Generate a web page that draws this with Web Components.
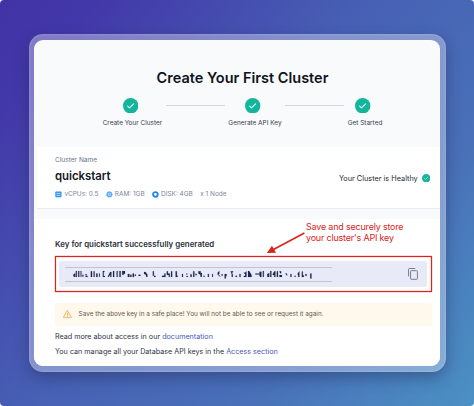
<!DOCTYPE html>
<html lang="en">
<head>
<meta charset="utf-8">
<title>Create Your First Cluster</title>
<style>
    html, body{
        margin:0;
        padding:0;
        background:#fff;
        overflow:hidden;
        font-family:Inter, "Liberation Sans", sans-serif;
    }
</style>
</head>
<body>
<app-stage>
    <setup-header heading="Create Your First Cluster" steps="Create Your Cluster,Generate API Key,Get Started"></setup-header>
    <cluster-summary name="quickstart" status="Your Cluster is Healthy">
        <spec-item icon="cpu">vCPUs: 0.5</spec-item>
        <spec-item icon="ram">RAM: 1GB</spec-item>
        <spec-item icon="disk">DISK: 4GB</spec-item>
        <spec-item>x 1 Node</spec-item>
    </cluster-summary>
    <key-section>
        <span slot="title">Key for quickstart successfully generated</span>
        <key-field slot="key"></key-field>
        <warning-bar slot="warning">Save the above key in a safe place! You will not be able to see or request it again.</warning-bar>
        <help-line>Read more about access in our <a slot="link">documentation</a></help-line>
        <help-line>You can manage all your Database API keys in the <a slot="link">Access section</a></help-line>
        <callout-note slot="note">Save and securely store<br>your cluster's API key</callout-note>
    </key-section>
</app-stage>

<script>
const create = (html) => {
    const template = document.createElement('template')
    template.innerHTML = html
    return template
}

class BaseElement extends HTMLElement {
    constructor(){
        super()
        this.attachShadow({mode:'open'})
        this.shadowRoot.appendChild(this.constructor.template.content.cloneNode(true))
    }
}

// gradient backdrop with the translucent frame round the page
class AppStage extends BaseElement {
    static template = create(`
        <style>
            :host{
                display:flex;
                box-sizing:border-box;
                width:474px;
                height:406px;
                padding:34px 28.5px 34.5px;
                border-radius:4px;
                background:linear-gradient(130deg, #4133a6 0%, #4338a9 12%, #4760b4 45%, #4970b8 72%, #4b91c4 100%);
            }
            .frame{
                flex:1;
                display:flex;
                box-sizing:border-box;
                padding:6px 5.5px 5.5px;
                border-radius:14px;
                background:rgba(240,240,250,.37);
                box-shadow:inset 0 0 0 1.5px rgba(255,255,255,.09), 0 6px 15px rgba(25,35,75,.38);
            }
            .page{
                flex:1;
                display:flex;
                flex-direction:column;
                border-radius:9px;
                overflow:hidden;
                background:#f8fafc;
            }
        </style>
        <div class="frame"><div class="page"><slot></slot></div></div>
    `)
}

class CheckBadge extends BaseElement {
    static template = create(`
        <style>
            :host{
                display:block;
                width:15.4px;
                height:15.4px;
            }
            svg{
                display:block;
                width:100%;
                height:100%;
            }
        </style>
        <svg viewBox="0 0 24 24">
            <circle cx="12" cy="12" r="12" fill="#14b59c"/>
            <path d="M7.2 12.6l2.9 2.7 6.4-6.2" fill="none" stroke="#e8fbf6" stroke-width="1.6" stroke-linecap="round" stroke-linejoin="round"/>
        </svg>
    `)
}

class SetupHeader extends BaseElement {
    static template = create(`
        <style>
            :host{
                display:flex;
                flex-direction:column;
                align-items:center;
                box-sizing:border-box;
                height:107px;
                padding:27.5px 0 0 11px;
            }
            h1{
                margin:0;
                font-size:14.5px;
                line-height:20px;
                font-weight:600;
                color:#10131c;
            }
            .steps{
                display:flex;
                gap:3.6px;
                margin-top:10.5px;
            }
            .step{
                display:flex;
                flex-direction:column;
                align-items:center;
                font-size:6.45px;
                line-height:10px;
                color:#3a404c;
                white-space:nowrap;
            }
            check-badge{
                margin:0 4px 4.5px 0;
            }
            .line{
                width:59px;
                height:1px;
                margin-top:7px;
                background:#d3d7dd;
            }
        </style>
        <h1></h1>
        <div class="steps"></div>
    `)

    connectedCallback(){
        this.shadowRoot.querySelector('h1').textContent = this.getAttribute('heading')
        const steps = this.shadowRoot.querySelector('.steps')
        this.getAttribute('steps').split(',').forEach((text, i) => {
            if(i > 0){
                const line = document.createElement('div')
                line.classList.add('line')
                steps.appendChild(line)
            }
            const step = document.createElement('div')
            step.classList.add('step')
            step.appendChild(document.createElement('check-badge'))
            step.appendChild(document.createElement('span')).textContent = text
            steps.appendChild(step)
        })
    }
}

const specIcons = {
    cpu: '<rect x="1" y="1.5" width="18" height="17" rx="2" fill="#2491ec"/><path d="M4 7h12M4 13h12" stroke="#d9edfd" stroke-width="2.4"/>',
    ram: '<circle cx="10" cy="10" r="8" fill="#65aff2"/><circle cx="10" cy="10" r="8" fill="none" stroke="#3d9bef" stroke-width="2.5" stroke-dasharray="3 1.6"/><path d="M7 7h6v6H7z" fill="none" stroke="#d9edfd" stroke-width="1.6"/>',
    disk: '<circle cx="10" cy="10" r="6.8" fill="#fff" stroke="#2188e8" stroke-width="5.6"/>'
}

class SpecItem extends BaseElement {
    static template = create(`
        <style>
            :host{
                display:flex;
                align-items:center;
                gap:2.2px;
                font-size:6.47px;
                line-height:9px;
                color:#7a8599;
                white-space:nowrap;
            }
            svg{
                width:6.8px;
                height:6.8px;
            }
        </style>
        <slot></slot>
    `)

    connectedCallback(){
        const icon = specIcons[this.getAttribute('icon')]
        if(icon){
            this.shadowRoot.querySelector('slot').insertAdjacentHTML('beforebegin', `<svg viewBox="0 0 20 20">${icon}</svg>`)
        }
    }
}

class ClusterSummary extends BaseElement {
    static template = create(`
        <style>
            :host{
                display:flex;
                justify-content:space-between;
                box-sizing:border-box;
                height:61.5px;
                margin-left:3px;
                padding:7.5px 9.7px 0 18px;
                background:#fff;
                border-bottom:1px solid #e9edf2;
            }
            .label{
                font-size:6.55px;
                line-height:10px;
                color:#66758a;
            }
            .name{
                margin-top:3.5px;
                font-size:11.4px;
                line-height:16px;
                font-weight:600;
                letter-spacing:-.04px;
                color:#14171f;
            }
            .specs{
                display:flex;
                gap:7.4px;
                margin-top:5.8px;
                padding-left:.4px;
            }
            .status{
                display:flex;
                align-items:center;
                gap:4.2px;
                height:47px;
                font-size:7.32px;
                color:#262a33;
            }
            .status check-badge{
                width:8.4px;
                height:8.4px;
            }
        </style>
        <div>
            <div class="label">Cluster Name</div>
            <div class="name"></div>
            <div class="specs"><slot></slot></div>
        </div>
        <div class="status"><span></span><check-badge></check-badge></div>
    `)

    connectedCallback(){
        this.shadowRoot.querySelector('.name').textContent = this.getAttribute('name')
        this.shadowRoot.querySelector('.status span').textContent = this.getAttribute('status')
    }
}

class KeySection extends BaseElement {
    static template = create(`
        <style>
            :host{
                flex:1;
                display:flex;
                flex-direction:column;
                position:relative;
                box-sizing:border-box;
                margin-top:10.5px;
                padding:19px 8.5px 0 21px;
                background:#fff;
            }
            h2{
                margin:0 0 6px;
                font-size:7.9px;
                line-height:12px;
                font-weight:600;
                color:#2a2e38;
            }
            slot[name=warning]{
                display:block;
                margin:11.5px 0 3.5px;
            }
            /* note floats over the section, next to the key */
            slot[name=note]{
                display:block;
                position:absolute;
                left:232px;
                top:0;
            }
        </style>
        <h2><slot name="title"></slot></h2>
        <slot name="key"></slot>
        <slot name="warning"></slot>
        <slot></slot>
        <slot name="note"></slot>
    `)
}

// masked key: only slivers of the characters stay visible
const slivers = [
    'M0 5.6q.5-2 2-1.8v3.4q-2 .2-2-1.6zM2.6 1.4h1v5.8h-1zM5 1.4h1.1v5.8H5zM7.4 1.2h.8v5.9h-.8zM9.2 5h1v2h-1zM11.8 4.6h1.8v1.2h-1zM12.4 6.2h2v1h-2z',
    'M17.6 1.6h1.3v5.6h-1.3zM20.4 1.6h1v5.6h-1zM23 3.8h1.4v3.4H23zM25.8 3.8h.8v3.2h-.8zM29.6 1.4h1.6v.9h-.7v4h1.2v.9h-2.1z',
    'M34.6 6.8l2.4-4.6h1.2v5h-1.1V4.6l-1.5 2.6zM39.8 1.4H41v5.8h-1.2zM43.4 1.4h1v5.8h-1zM46.2 1.4h1.3v5.8h-1.3zM49 1.4h2.8v2.6h-1.2v1H49zM54.6 4.4h1.6v2.8h-1.6zM57 5h1.3v2.2H57zM59.4 3.8h1.4v3.4h-1.4zM61.6 4.8h1v1.6h-1z',
    'M65.4 5h1.8v1.2h-1.8zM70.8 2.2h1.5l1.9 2.7v2.3H73l-.2-2-2-1.2zM79.6 1.6h1.1v4.4h-1.1zM80.8 6h1.5v1.2h-1.5z',
    'M88.8 6h2.3V3.8h1.2v3.4h-3.5zM93.6 1.6h1.2v2.2h1.8v3.4h-1v-2h-2zM97.8 1.6H99v5.6h-1.2zM102.4 1.6h1.3v5.6h-1.3zM103.6 6h1v1h-1z',
    'M108.8 4.2h1v3h-1zM113.2 3.8h.9v1h-.9zM113.2 6.2h1.4v1h-1.4zM117.2 4.6h1.3v2.6h-1.3zM120 1.6h1.2v5.6H120zM122.2 4h1.2v1.6h-1.2zM125.2 1.6h2.3v1.6h1.2v4h-1.2l-.4-2.4-1.9-.8zM130.4 6h1v1.2h-1z',
    'M134.6 4.2h1.1v3h-1.1zM139 4.2h.8v3h-.8zM144.4 3l1.8-1.6v2.3l-1 .8 1.8 1.8v.8l-2.6-2.2zM148.4 4.4h1v1.6h-1zM151.4 4.4h2v2.2h-.8V8.8h-1.2z',
    'M157.4 1.5h2.6l-.2 1.2h-1.2l1 2v2.5h-1.1V4.6zM162.4 6h1.3v1.2h-1.3zM166.2 4.4h1.2v2.8h-1.2zM170.2 3h1.6l1.5-1.4v5.6h-2.7v-1h1.3v-2zM174.8 1.4h1.2l2.4 4v1.8h-3.6z',
    'M182.2 3.8h3.4v1.1h-3.4zM186.4 2h1.8v5.2H187l-1-2zM189.6 1.4h1v5.8h-1zM194 4.4l2-1v3.8h-1.8zM197 1.4h1.2v5.8H197zM199.6 4.4l1.6-2.8h1v5.6H201v-2h-1.4zM203.6 1.6h1.2v5.6h-1.2zM206.2 1.6h1.8v2h-1zM206.2 5.4h2.6v1.8h-2.6z',
    'M212.2 3.8h1.4l.6 1.8h-1zM217.2 4.4h1.1v2.8h-1.1zM221.4 6h1v1.2h-1zM224.2 4.4l2-2.8v5.6H225v-2zM228.6 1.8h1v3.8h1v1.6h-2zM232.2 4.2h1.2v2h-1.2zM237 3.8h1.3v5H237z'
]

class KeyField extends BaseElement {
    static template = create(`
        <style>
            :host{
                display:flex;
                box-sizing:border-box;
                height:35.5px;
                padding:4px 4px 3.5px 3px;
                border:1px solid #d9241c;
                box-shadow:0 0 .8px .2px rgba(217,36,28,.55), inset 0 0 .8px .2px rgba(217,36,28,.4);
                background:#fff;
            }
            .field{
                flex:1;
                display:flex;
                align-items:center;
                justify-content:space-between;
                padding:0 8.4px 0 5.5px;
                border-radius:3px;
                background:#e9eaf8;
            }
            .value{
                width:267.5px;
                height:13px;
                border:solid #c0c3d0;
                border-width:1px 0;
            }
            svg{
                display:block;
            }
        </style>
        <div class="field">
            <div class="value">
                <svg width="267" height="13" viewBox="-8.2 -1.7 267 13">
                    <path d="${slivers.join('')}" fill="#20264a" stroke="#20264a" stroke-width=".15"/>
                </svg>
            </div>
            <svg width="10" height="12" viewBox="0 0 10 12" fill="none" stroke="#777b8b" stroke-width="1" stroke-linejoin="round">
                <path d="M.6 8.4V1.2q0-.7.7-.7h5.9"/>
                <rect x="2.6" y="2.7" width="6.8" height="8.6" rx=".7"/>
            </svg>
        </div>
    `)
}

class WarningBar extends BaseElement {
    static template = create(`
        <style>
            :host{
                display:flex;
                align-items:center;
                gap:6.3px;
                height:22.5px;
                padding-left:8.3px;
                border-radius:2px;
                background:#fff8ec;
                font-size:6.4px;
                color:#645a4f;
                white-space:nowrap;
            }
        </style>
        <svg width="9" height="8.4" viewBox="0 0 18 17" fill="none" stroke="#f0ad4e" stroke-width="1.8" stroke-linejoin="round" stroke-linecap="round">
            <path d="M9 1.4L17 15.6H1z"/>
            <path d="M9 6.6v4.2M9 13v.2"/>
        </svg>
        <span><slot></slot></span>
    `)
}

class HelpLine extends BaseElement {
    static template = create(`
        <style>
            :host{
                display:block;
                font-size:7.18px;
                line-height:15px;
                color:#30343e;
                white-space:nowrap;
            }
            ::slotted(a){
                color:#4759b8;
            }
        </style>
        <slot></slot><slot name="link"></slot>
    `)
}

class CalloutNote extends BaseElement {
    static template = create(`
        <style>
            :host{
                display:flex;
                gap:1px;
                padding-top:1.5px;
                font-size:8.95px;
                line-height:11px;
                letter-spacing:-.17px;
                color:#d9241c;
                white-space:nowrap;
            }
            svg{
                margin-top:11px;
            }
        </style>
        <svg width="39" height="22" viewBox="0 0 39 22">
            <path d="M38.4 1L7 17.8" stroke="#d9241c" stroke-width="1.6"/>
            <path d="M.8 21L6 13.8 10 20.8z" fill="#d9241c"/>
        </svg>
        <div><slot></slot></div>
    `)
}

window.customElements.define('app-stage', AppStage)
window.customElements.define('check-badge', CheckBadge)
window.customElements.define('setup-header', SetupHeader)
window.customElements.define('spec-item', SpecItem)
window.customElements.define('cluster-summary', ClusterSummary)
window.customElements.define('key-section', KeySection)
window.customElements.define('key-field', KeyField)
window.customElements.define('warning-bar', WarningBar)
window.customElements.define('help-line', HelpLine)
window.customElements.define('callout-note', CalloutNote)
</script>
</body>
</html>
